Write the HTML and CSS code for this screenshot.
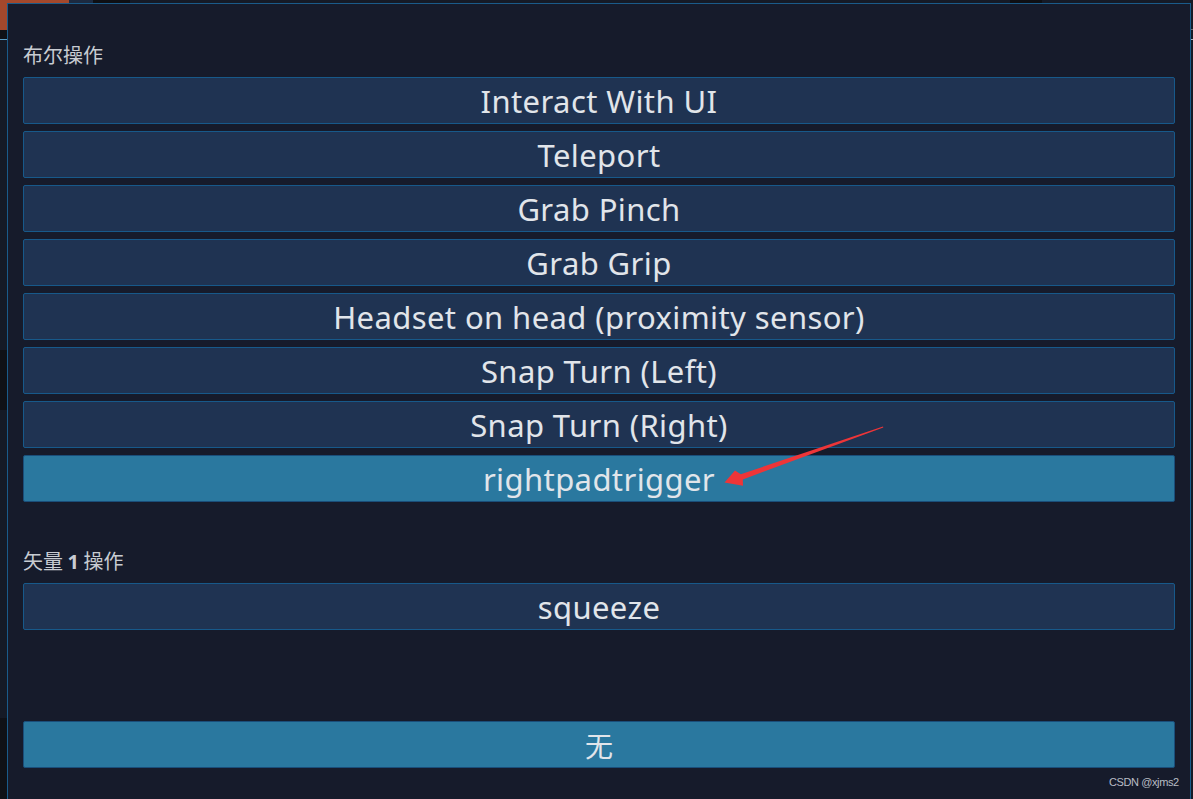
FILE: index.html
```html
<!DOCTYPE html>
<html lang="zh">
<head>
<meta charset="utf-8">
<title>操作绑定</title>
<link rel="stylesheet" href="styles.css">
</head>
<body>
<div class="dialog">
  <section class="group">
    <h2 class="group-title">布尔操作</h2>
    <div class="list">
      <div class="action">Interact With UI</div>
      <div class="action">Teleport</div>
      <div class="action">Grab Pinch</div>
      <div class="action">Grab Grip</div>
      <div class="action">Headset on head (proximity sensor)</div>
      <div class="action">Snap Turn (Left)</div>
      <div class="action">Snap Turn (Right)</div>
      <div class="action selected">rightpadtrigger</div>
    </div>
  </section>
  <section class="group group-vector">
    <h2 class="group-title">矢量 <b class="num">1</b> 操作</h2>
    <div class="list">
      <div class="action">squeeze</div>
    </div>
  </section>
  <div class="action selected none">无</div>
</div>
<svg class="arrow" width="1193" height="799" viewBox="0 0 1193 799" aria-hidden="true">
  <polygon points="724.5,482.5 735,470.5 740.8,474.2 883,426.6 883.3,427.4 742.8,479.4 743,485.8" fill="#ee3538"/>
</svg>
<div class="watermark">CSDN @xjms2</div>
</body>
</html>
```
FILE: styles.css
```css
html, body {
  margin: 0;
  padding: 0;
}
body {
  width: 1193px;
  height: 799px;
  overflow: hidden;
  position: relative;
  background:
    linear-gradient(#a3482c, #a3482c) 0 0 / 69px 30px no-repeat,
    linear-gradient(#1c2a40, #1c2a40) 69px 0 / 24px 3px no-repeat,
    linear-gradient(#0e0f13, #0e0f13) 93px 0 / 37px 3px no-repeat,
    linear-gradient(#0e0f13, #0e0f13) 1010px 0 / 32px 3px no-repeat,
    linear-gradient(#0f1117, #0f1117) 0 30px / 7px 9px no-repeat,
    linear-gradient(#5a9cc4, #5a9cc4) 0 39px / 7px 1px no-repeat,
    linear-gradient(#0f1117, #0f1117) 0 350px / 7px 60px no-repeat,
    linear-gradient(#4b8fbb, #4b8fbb) 0 404px / 7px 1px no-repeat,
    linear-gradient(#0f1117, #0f1117) 0 718px / 7px 81px no-repeat,
    linear-gradient(#4b8fbb, #4b8fbb) 0 768px / 7px 1px no-repeat,
    linear-gradient(#6b6e75, #6b6e75) 1191px 29px / 2px 1px no-repeat,
    linear-gradient(#a9b2bf, #a9b2bf) 1191px 39px / 2px 1px no-repeat,
    #151a26;
  font-family: "Noto Sans", "Noto Sans CJK SC", sans-serif;
}

.dialog {
  box-sizing: border-box;
  margin: 3px 0 0 7px;
  width: 1184px;
  height: 796px;
  background: #161b2b;
  border: 1px solid #1a5b8a;
  border-bottom: none;
  padding: 0 15px;
  display: flex;
  flex-direction: column;
}

.group-title {
  margin: 39px 0 10px;
  height: 24px;
  font-family: "Noto Sans CJK SC", "Noto Sans", sans-serif;
  font-weight: 400;
  font-size: 20px;
  line-height: 24px;
  color: #c8ccd2;
}
.group-title .num {
  font-family: "Noto Sans", sans-serif;
  font-weight: 700;
}
.group-vector .group-title {
  margin-top: 47px;
}

.list {
  display: flex;
  flex-direction: column;
  gap: 7px;
}

.action {
  box-sizing: border-box;
  height: 47px;
  padding-top: 1px;
  background: #1f3352;
  border: 1px solid #17598a;
  border-radius: 2px;
  display: flex;
  align-items: center;
  justify-content: center;
  font-size: 31px;
  color: #e1e5ea;
  letter-spacing: 0.4px;
}
.action.selected {
  background: #2a789f;
  border-color: #1a4e7a;
}
.none {
  margin-top: 91px;
  font-family: "Noto Sans CJK SC", sans-serif;
  font-size: 28px;
  letter-spacing: 0;
}

.arrow {
  position: absolute;
  left: 0;
  top: 0;
  pointer-events: none;
}

.watermark {
  position: absolute;
  left: 1109px;
  top: 774px;
  font-family: "Liberation Sans", sans-serif;
  font-size: 11px;
  line-height: 16px;
  letter-spacing: -0.4px;
  color: #b9bdc5;
}
```
